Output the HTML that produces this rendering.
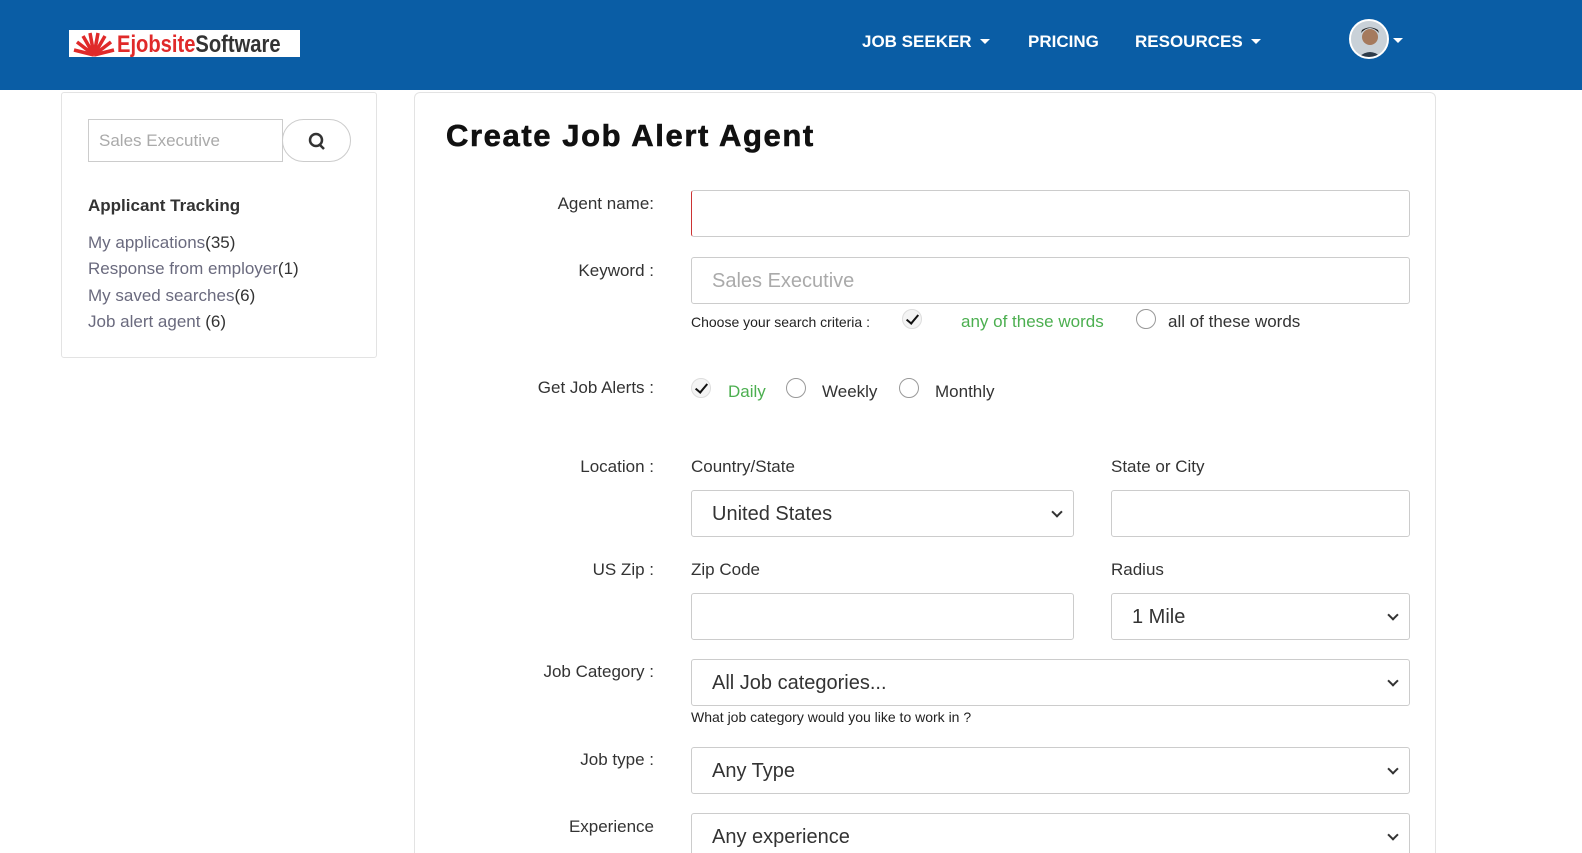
<!DOCTYPE html>
<html style="width:1582px;height:853px;overflow:hidden"><head><meta charset="utf-8"><style>
*{box-sizing:border-box;margin:0;padding:0}
body{width:1582px;height:853px;overflow:hidden;background:#fff;font-family:"Liberation Sans",sans-serif;color:#222;position:relative}
.hdr{position:absolute;left:0;top:0;width:1582px;height:90px;background:#0a5da5}
.logo{position:absolute;left:69px;top:30px;width:231px;height:27px;background:#fff;overflow:hidden;white-space:nowrap}
.logo svg{position:absolute;left:2px;top:0}
.logo b{position:absolute;left:48px;top:1px;font-size:24px;font-weight:bold;transform:scaleX(.84);transform-origin:left;white-space:nowrap}
.nav{position:absolute;top:32px;color:#fff;font-weight:bold;font-size:17px}
.caret{display:inline-block;border-left:5px solid transparent;border-right:5px solid transparent;border-top:5px solid #fff;margin-left:8px;vertical-align:3px}
.av{position:absolute;left:1349px;top:19px;width:40px;height:40px;border-radius:50%;background:#ddd;border:2px solid #fff;overflow:hidden}
.side{position:absolute;left:61px;top:92px;width:316px;height:266px;border:1px solid #e3e3e3;border-radius:3px}
.sin{position:absolute;left:26px;top:26px;width:195px;height:43px;border:1px solid #ccc;color:#aaa;font-size:17px;padding:11px 10px}
.sbtn{position:absolute;left:220px;top:26px;width:69px;height:43px;border:1px solid #ccc;border-radius:22px;background:#fff}
.side h4{position:absolute;left:26px;top:103px;font-size:17px;color:#333}
.links{position:absolute;left:26px;top:137px;font-size:17px;line-height:26.3px;color:#6a6a7e}
.links span{color:#333}
.main{position:absolute;left:414px;top:92px;width:1022px;height:761px;border:1px solid #e3e3e3;border-bottom:none;border-radius:6px 6px 0 0}
h1{position:absolute;left:446px;top:118px;font-size:31px;font-weight:900;color:#111;letter-spacing:1.6px;-webkit-text-stroke:.6px #111}
.lbl{position:absolute;right:928px;font-size:17px;color:#333;text-align:right;white-space:nowrap}
.in{position:absolute;border:1px solid #ccc;border-radius:3px;height:47px;font-size:20px;color:#333;padding:12px 20px;background:#fff}
.sel::after{content:"";position:absolute;right:12px;top:17px;width:6px;height:6px;border-right:2px solid #333;border-bottom:2px solid #333;transform:rotate(45deg)}
.t{position:absolute;font-size:17px;color:#333;white-space:nowrap}
.sm{position:absolute;font-size:14px;color:#222;white-space:nowrap}
.rad{position:absolute;width:20px;height:20px;border:1px solid #999;border-radius:50%;background:#fff}
.chk{position:absolute;width:20px;height:20px;border-radius:50%;background:#f4f4f4;border:1px solid #ddd}
.chk::after{content:"";position:absolute;left:6px;top:2px;width:5px;height:10px;border-right:2.5px solid #111;border-bottom:2.5px solid #111;transform:rotate(40deg)}
.g{color:#4caf50}
</style></head><body>
<div class="hdr">
<div class="logo"><svg width="46" height="27" viewBox="0 0 46 27"><g stroke="#e02a2a" stroke-width="3.5"><line x1="23" y1="25" x2="3" y2="20"/><line x1="23" y1="25" x2="6" y2="12"/><line x1="23" y1="25" x2="12" y2="6"/><line x1="23" y1="25" x2="19" y2="3"/><line x1="23" y1="25" x2="27" y2="3"/><line x1="23" y1="25" x2="34" y2="6"/><line x1="23" y1="25" x2="40" y2="12"/><line x1="23" y1="25" x2="43" y2="20"/></g></svg><b><span style="color:#e02a2a">Ejobsite</span><span style="color:#333">Software</span></b></div>
<div class="nav" style="left:862px">JOB SEEKER<span class="caret"></span></div>
<div class="nav" style="left:1028px">PRICING</div>
<div class="nav" style="left:1135px">RESOURCES<span class="caret"></span></div>
<div class="av"><svg width="40" height="40"><rect width="40" height="40" fill="#c9d1d8"/><circle cx="19" cy="16" r="8" fill="#a57a5e"/><path d="M10 12 Q19 2 28 12 L27 9 Q19 4 11 9Z" fill="#222"/><path d="M4 40 Q19 22 34 40Z" fill="#2d3b4a"/></svg></div>
<span class="caret" style="position:absolute;left:1385px;top:38px"></span>
</div>
<div class="side">
<div class="sin">Sales Executive</div>
<div class="sbtn"><svg width="69" height="43"><circle cx="33" cy="20" r="6" fill="none" stroke="#333" stroke-width="2.5"/><line x1="37" y1="25" x2="41" y2="29" stroke="#333" stroke-width="2.5"/></svg></div>
<h4>Applicant Tracking</h4>
<div class="links">My applications<span>(35)</span><br>Response from employer<span>(1)</span><br>My saved searches<span>(6)</span><br>Job alert agent <span>(6)</span></div>
</div>
<div class="main"></div>
<h1>Create Job Alert Agent</h1>
<div class="lbl" style="top:194px">Agent name:</div>
<div class="in" style="left:691px;top:190px;width:719px;border-left-color:#c33"></div>
<div class="lbl" style="top:261px">Keyword :</div>
<div class="in" style="left:691px;top:257px;width:719px;color:#aaa">Sales Executive</div>
<div class="sm" style="left:691px;top:314px">Choose your search criteria :</div>
<div class="chk" style="left:902px;top:309px"></div>
<div class="t g" style="left:961px;top:312px">any of these words</div>
<div class="rad" style="left:1136px;top:309px"></div>
<div class="t" style="left:1168px;top:312px">all of these words</div>
<div class="lbl" style="top:378px">Get Job Alerts :</div>
<div class="chk" style="left:691px;top:378px"></div>
<div class="t g" style="left:728px;top:382px">Daily</div>
<div class="rad" style="left:786px;top:378px"></div>
<div class="t" style="left:822px;top:382px">Weekly</div>
<div class="rad" style="left:899px;top:378px"></div>
<div class="t" style="left:935px;top:382px">Monthly</div>
<div class="lbl" style="top:457px">Location :</div>
<div class="t" style="left:691px;top:457px">Country/State</div>
<div class="t" style="left:1111px;top:457px">State or City</div>
<div class="in sel" style="left:691px;top:490px;width:383px">United States</div>
<div class="in" style="left:1111px;top:490px;width:299px"></div>
<div class="lbl" style="top:560px">US Zip :</div>
<div class="t" style="left:691px;top:560px">Zip Code</div>
<div class="t" style="left:1111px;top:560px">Radius</div>
<div class="in" style="left:691px;top:593px;width:383px"></div>
<div class="in sel" style="left:1111px;top:593px;width:299px">1 Mile</div>
<div class="lbl" style="top:662px">Job Category :</div>
<div class="in sel" style="left:691px;top:659px;width:719px">All Job categories...</div>
<div class="sm" style="left:691px;top:709px">What job category would you like to work in ?</div>
<div class="lbl" style="top:750px">Job type :</div>
<div class="in sel" style="left:691px;top:747px;width:719px">Any Type</div>
<div class="lbl" style="top:817px">Experience</div>
<div class="in sel" style="left:691px;top:813px;width:719px;height:40px;border-bottom:none;border-radius:3px 3px 0 0">Any experience</div>
</body></html>
